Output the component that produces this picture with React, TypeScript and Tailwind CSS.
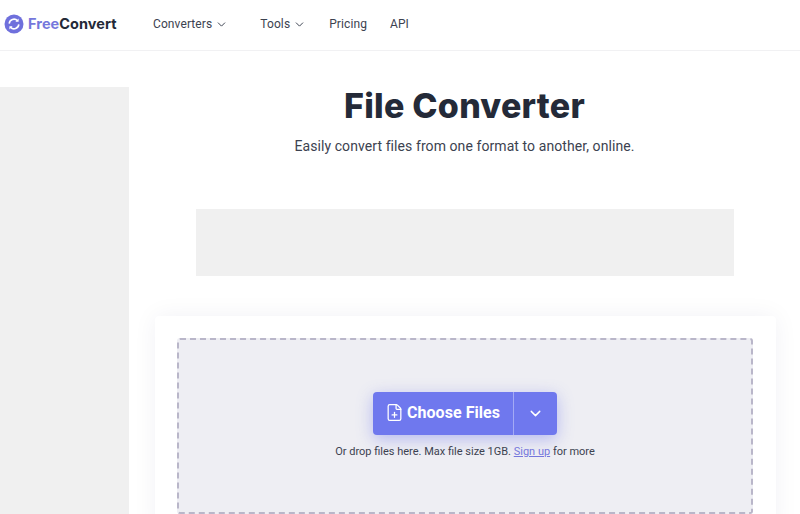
import { ChevronDown, FilePlus } from "lucide-react";

function NavItem({ label, hasMenu }: { label: string; hasMenu?: boolean }) {
	return (
		<a className="flex items-center gap-[3px] text-[12px] leading-[16px] tracking-[0.1px] text-[#3c4250]">
			{label}
			{hasMenu && <ChevronDown size={13} strokeWidth={1.8} className="mt-px" />}
		</a>
	);
}

function Logo() {
	return (
		<svg width="20" height="20" viewBox="0 0 20 20" className="shrink-0">
			<circle cx="10" cy="10" r="9.5" fill="#6f70dc" />
			<path
				d="M5.2 9.6a4.8 4.8 0 0 1 8.3-2.9M14.8 10.4a4.8 4.8 0 0 1-8.3 2.9"
				fill="none"
				stroke="#fff"
				strokeWidth="1.6"
			/>
			<path d="M14.6 4.6v3.2h-3.2zM5.4 15.4v-3.2h3.2z" fill="#fff" />
		</svg>
	);
}

export default function App() {
	return (
		<div className="h-[514px] w-[800px] overflow-hidden bg-white font-['Roboto',sans-serif] text-[#242a38]">
			<header className="flex h-[51px] items-center border-b border-[#f1f1f3] pb-[3px] pl-1">
				<div className="flex w-[149px] items-center gap-1">
					<Logo />
					<span className="font-['Inter',sans-serif] text-[14.5px] font-bold tracking-[0.05px]">
						<span className="text-[#7577dc]">Free</span>
						<span>Convert</span>
					</span>
				</div>
				<nav className="flex items-center gap-[23px]">
					<div className="mr-[9px]">
						<NavItem label="Converters" hasMenu />
					</div>
					<NavItem label="Tools" hasMenu />
					<NavItem label="Pricing" />
					<NavItem label="API" />
				</nav>
			</header>

			<div className="flex pt-[36px]">
				<aside className="h-[427px] w-[129px] shrink-0 bg-[#f0f0f0]" />
				<main className="flex min-w-0 flex-1 flex-col items-center">
					<h1 className="font-['Inter',sans-serif] text-[34px] leading-[38px] font-extrabold tracking-[0.25px]">
						File Converter
					</h1>
					<p className="mt-[11px] text-[14px] leading-[20px] tracking-[0.08px] text-[#3c4250]">
						Easily convert files from one format to another, online.
					</p>
					<div className="mt-[53px] h-[67px] w-[538px] bg-[#f0f0f0]" />
					<section className="mt-[40px] ml-[2px] w-[621px] shrink-0 rounded-[4px] bg-white py-[22px] pr-[23px] pl-[22px] shadow-[0_0_24px_rgba(40,40,80,0.06)]">
						<div className="flex h-[176px] flex-col items-center rounded-[3px] border-2 border-dashed border-[#b9b6c9] bg-[#eeeef3] pt-[52px]">
							<div className="flex h-[43px] w-[184px] items-stretch rounded-[4px] bg-[#6f78ee] text-white shadow-[0_4px_16px_rgba(111,120,238,0.45)]">
								<button
									type="button"
									className="flex flex-1 items-center gap-[3px] pb-[2px] pl-[12px] text-[16px] leading-[20px] font-bold tracking-[0.05px]"
								>
									<FilePlus size={19} strokeWidth={1.6} />
									Choose Files
								</button>
								<button
									type="button"
									className="flex w-[44px] items-center justify-center border-l border-[#a4aaf5]"
								>
									<ChevronDown size={17} strokeWidth={2} />
								</button>
							</div>
							<p className="mt-[9px] text-[11px] leading-[16px] text-[#3c4250]">
								Or drop files here. Max file size 1GB.{" "}
								<a className="text-[#7577dc] underline">Sign up</a> for more
							</p>
						</div>
					</section>
				</main>
			</div>
		</div>
	);
}
